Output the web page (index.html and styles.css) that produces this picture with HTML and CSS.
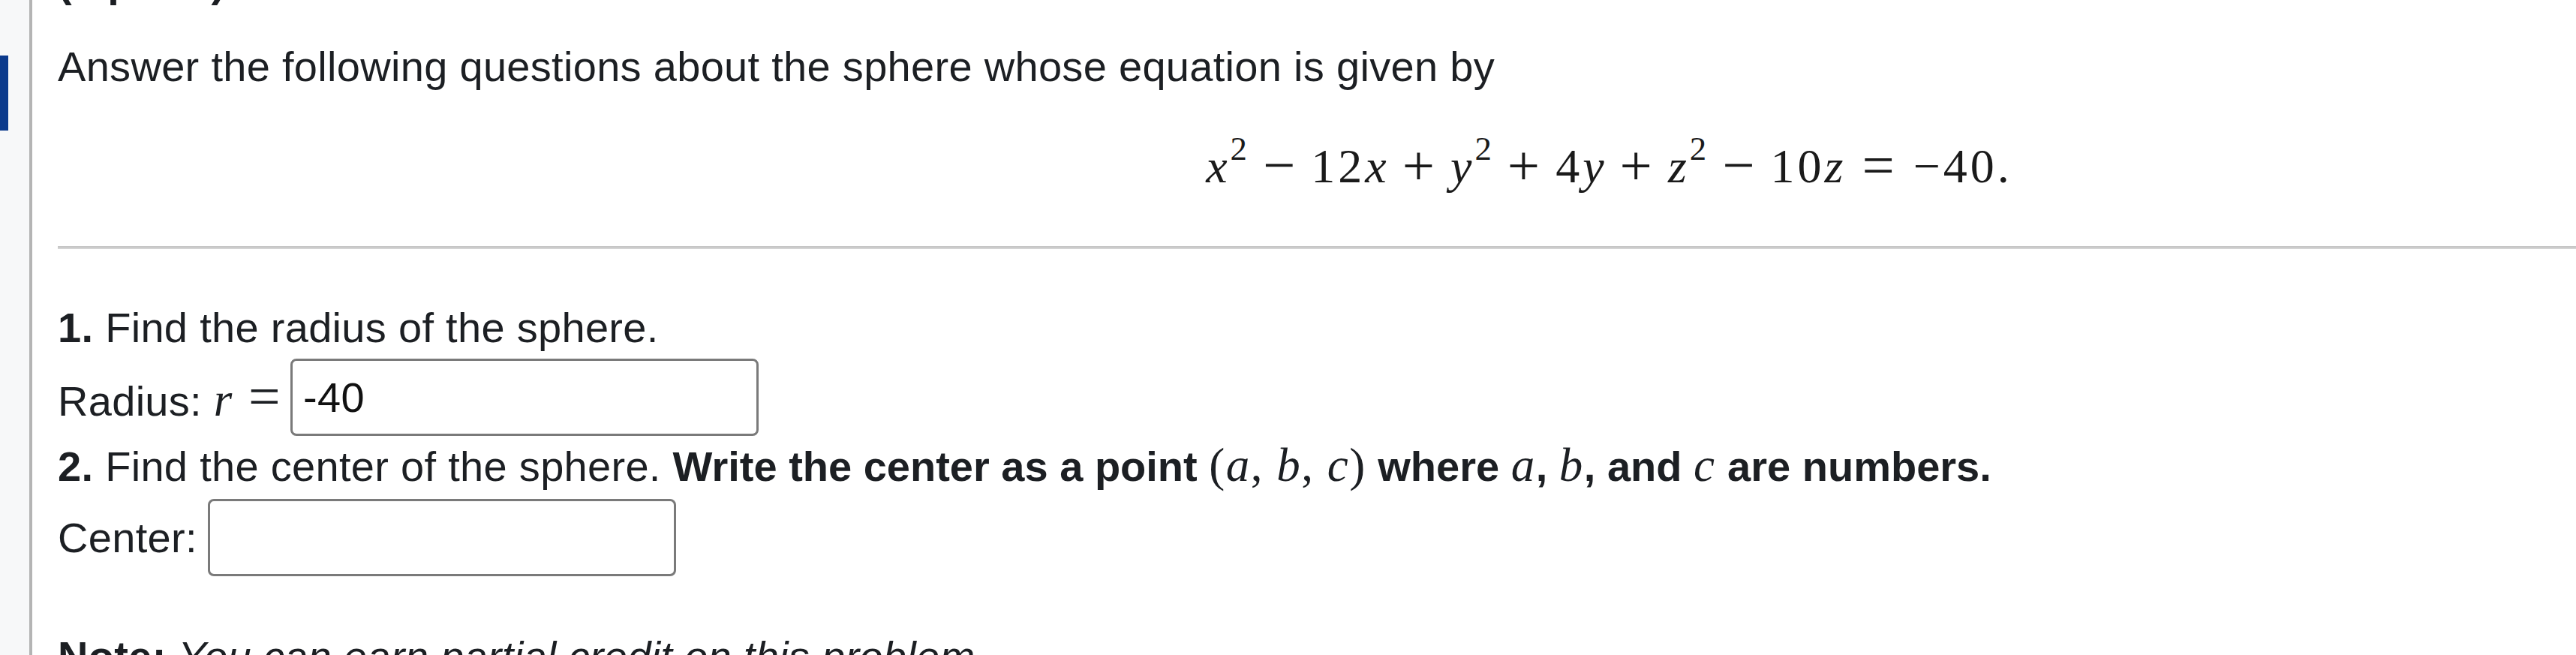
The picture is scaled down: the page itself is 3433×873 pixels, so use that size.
FILE: index.html
```html
<!DOCTYPE html>
<html lang="en">
<head>
<meta charset="utf-8">
<title>Sphere problem</title>
<link rel="stylesheet" href="styles.css">
</head>
<body>
<div class="page">
  <aside class="rail"><div class="rail-marker"></div></aside>
  <main class="problem">
    <p class="points">(1 point)</p>
    <p class="intro">Answer the following questions about the sphere whose equation is given by</p>
    <div class="display-math"><span class="mi">x</span><sup class="msup">2</sup><span class="mo">−</span><span class="mn">12</span><span class="mi">x</span><span class="mo">+</span><span class="mi">y</span><sup class="msup">2</sup><span class="mo">+</span><span class="mn">4</span><span class="mi">y</span><span class="mo">+</span><span class="mi">z</span><sup class="msup">2</sup><span class="mo">−</span><span class="mn">10</span><span class="mi">z</span><span class="mo rel">=</span><span class="mn neg">−</span><span class="mn">40.</span></div>
    <hr class="rule">
    <p class="question q1"><b>1.</b> Find the radius of the sphere.</p>
    <div class="answer-row radius-row">
      <span class="label">Radius: <span class="math"><i>r</i><span class="rel-inline">=</span></span></span>
      <input class="answer" type="text" value="-40" aria-label="Radius">
    </div>
    <p class="question q2"><b>2.</b> Find the center of the sphere. <b class="emph">Write the center as a point <span class="math">(<i>a</i>, <i>b</i>, <i>c</i>)</span> where <span class="math"><i>a</i></span>, <span class="math"><i>b</i></span>, and <span class="math"><i>c</i></span> are numbers.</b></p>
    <div class="answer-row center-row">
      <span class="label">Center:</span>
      <input class="answer" type="text" value="" aria-label="Center">
    </div>
    <p class="note"><b>Note:</b> <i>You can earn partial credit on this problem.</i></p>
  </main>
</div>
</body>
</html>
```

FILE: styles.css
```css
html {
  overflow: hidden;
}

body {
  margin: 0;
  background: #ffffff;
  color: #1c1f23;
  font-family: "Liberation Sans", Arial, sans-serif;
  font-size: 56px;
  line-height: 67px;
  letter-spacing: 0.3px;
}

.page {
  display: flex;
  min-height: 873px;
}

.rail {
  flex: none;
  width: 39px;
  background: #f7f8f9;
  border-right: 4px solid #b4b4b4;
}

.rail-marker {
  margin-top: 74px;
  width: 11px;
  height: 100px;
  background: #0b3a8c;
}

.problem {
  flex: none;
  width: 4135px;
  padding-left: 34px;
  display: flex;
  flex-direction: column;
}

p {
  margin: 0;
}

.points {
  margin-top: -58px;
  font-weight: bold;
}

.intro {
  margin-top: 46px;
}

.display-math {
  margin-top: 63px;
  height: 72px;
  text-align: center;
  font-family: "Liberation Serif", "Times New Roman", serif;
  font-size: 64px;
  line-height: 72px;
  letter-spacing: 4px;
  color: #1a1a1a;
}

.mi {
  font-style: italic;
}

.msup {
  font-size: 0.7em;
  line-height: 0;
  vertical-align: 30px;
}

.mo {
  font-size: 1.2em;
  margin: 0 17px;
  vertical-align: -3px;
}

.mo.rel {
  margin: 0 21px;
}

.rule {
  margin: 71px 0 0;
  height: 0;
  border: 0;
  border-top: 2px solid #c6c6c6;
  border-bottom: 2px solid #d4d4d4;
}

.question.q1 {
  margin-top: 71px;
}

.answer-row {
  display: flex;
  align-items: center;
}

.radius-row {
  margin-top: 8px;
}

.q2 {
  margin-top: 7px;
}

.emph {
  letter-spacing: 0;
}

.center-row {
  margin-top: 10px;
}

.math {
  font-family: "Liberation Serif", "Times New Roman", serif;
  font-weight: normal;
  font-size: 63px;
  line-height: 1;
  letter-spacing: 1.5px;
}

.math i {
  font-style: italic;
}

.rel-inline {
  margin: 0 0 0 20px;
  font-size: 1.2em;
}

.answer {
  box-sizing: border-box;
  width: 624px;
  height: 103px;
  margin: 0 0 0 12px;
  padding: 0 14px;
  border: 3px solid #7a7a7a;
  border-radius: 8px;
  background: #ffffff;
  color: #111111;
  font-family: "Liberation Sans", Arial, sans-serif;
  font-size: 56px;
  letter-spacing: 0.3px;
  outline: none;
}

.center-row .answer {
  margin-left: 14px;
}

.note {
  margin-top: 73px;
}
```
